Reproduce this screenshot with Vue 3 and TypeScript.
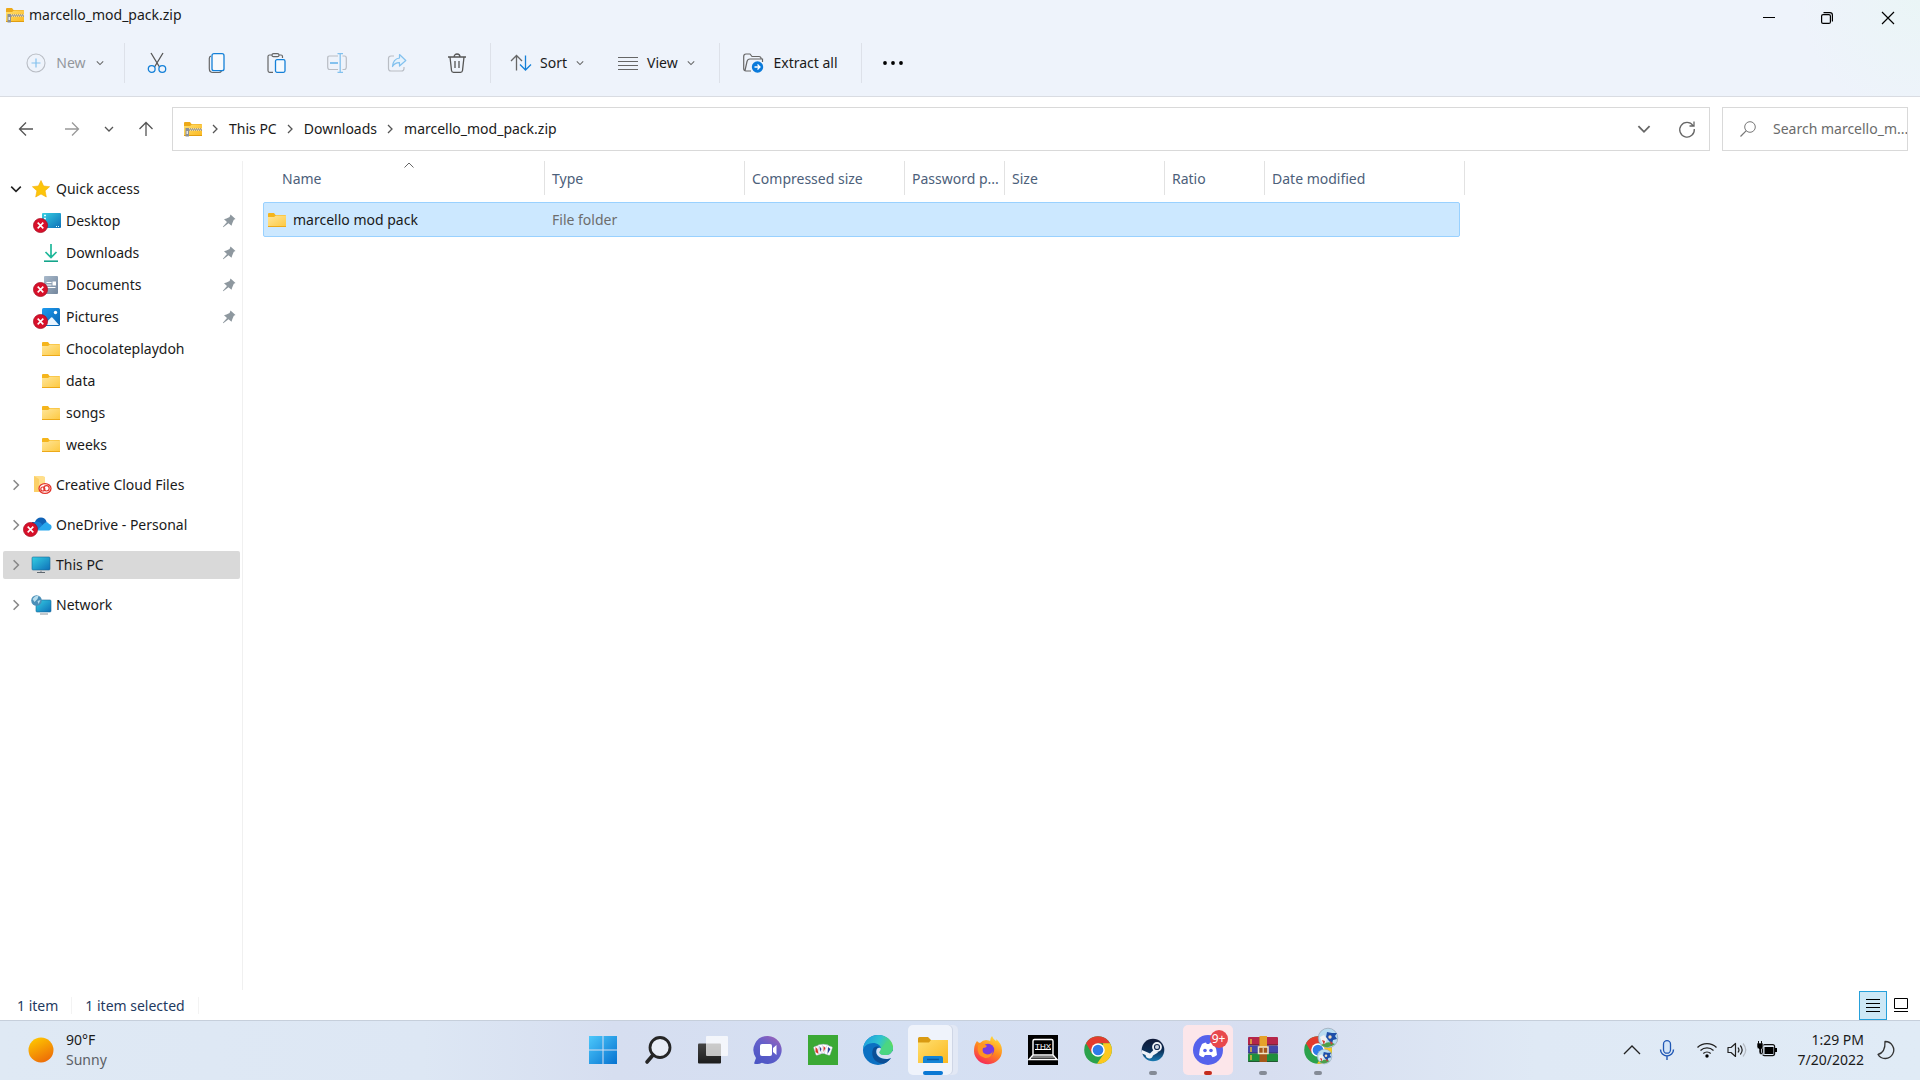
<script setup lang="ts">
interface Place {
  label: string
  icon: string
  pinned?: boolean
  offline?: boolean
}
interface Column {
  label: string
  width: number
}
interface TaskApp {
  name: string
  icon: string
  state?: 'active' | 'alert' | 'running'
}

const quickAccess: Place[] = [
  { label: 'Desktop', icon: 'desktop', pinned: true, offline: true },
  { label: 'Downloads', icon: 'downloads', pinned: true },
  { label: 'Documents', icon: 'documents', pinned: true, offline: true },
  { label: 'Pictures', icon: 'pictures', pinned: true, offline: true },
  { label: 'Chocolateplaydoh', icon: 'folder' },
  { label: 'data', icon: 'folder' },
  { label: 'songs', icon: 'folder' },
  { label: 'weeks', icon: 'folder' },
]

const roots: Place[] = [
  { label: 'Creative Cloud Files', icon: 'creative' },
  { label: 'OneDrive - Personal', icon: 'onedrive', offline: true },
  { label: 'This PC', icon: 'pc' },
  { label: 'Network', icon: 'network' },
]
const currentRoot = 'This PC'

const tools = [
  { name: 'Cut', icon: 'cut' },
  { name: 'Copy', icon: 'copy' },
  { name: 'Paste', icon: 'paste' },
  { name: 'Rename', icon: 'rename' },
  { name: 'Share', icon: 'share' },
  { name: 'Delete', icon: 'trash' },
]

const crumbs = ['This PC', 'Downloads', 'marcello_mod_pack.zip']

const columns: Column[] = [
  { label: 'Name', width: 282 },
  { label: 'Type', width: 200 },
  { label: 'Compressed size', width: 160 },
  { label: 'Password p...', width: 100 },
  { label: 'Size', width: 160 },
  { label: 'Ratio', width: 100 },
  { label: 'Date modified', width: 200 },
]

const apps: TaskApp[] = [
  { name: 'Start', icon: 'start' },
  { name: 'Search', icon: 'find' },
  { name: 'Task view', icon: 'taskview' },
  { name: 'Chat', icon: 'chat' },
  { name: 'Solitaire', icon: 'cards' },
  { name: 'Edge', icon: 'edge' },
  { name: 'File Explorer', icon: 'explorer', state: 'active' },
  { name: 'Firefox', icon: 'firefox' },
  { name: 'THX', icon: 'thx' },
  { name: 'Chrome', icon: 'chrome' },
  { name: 'Steam', icon: 'steam', state: 'running' },
  { name: 'Discord', icon: 'discord', state: 'alert' },
  { name: 'WinRAR', icon: 'winrar', state: 'running' },
  { name: 'Chrome profile', icon: 'chromeprofile', state: 'running' },
]
</script>

<template>
  <div class="screen">
    <svg class="sprite" aria-hidden="true">
      <defs>
        <linearGradient id="gFolder" x1="0" y1="0" x2="1" y2="1">
          <stop offset="0" stop-color="#ffe69a" /><stop offset="1" stop-color="#fdc83f" />
        </linearGradient>
        <linearGradient id="gExplorer" x1="0" y1="0" x2="1" y2="1">
          <stop offset="0" stop-color="#ffdf70" /><stop offset="1" stop-color="#fbb81f" />
        </linearGradient>
        <linearGradient id="gScreen" x1="0" y1="0" x2="1" y2="1">
          <stop offset="0" stop-color="#35cfe3" /><stop offset="1" stop-color="#0e6fb8" />
        </linearGradient>
        <linearGradient id="gPic" x1="0" y1="0" x2="1" y2="1">
          <stop offset="0" stop-color="#1d9bf0" /><stop offset="1" stop-color="#0a63b0" />
        </linearGradient>
        <linearGradient id="gDoc" x1="0" y1="0" x2="1" y2="1">
          <stop offset="0" stop-color="#a9bacb" /><stop offset="1" stop-color="#73869d" />
        </linearGradient>
        <linearGradient id="gSun" x1="0.2" y1="0" x2="0.7" y2="1">
          <stop offset="0" stop-color="#ffc800" /><stop offset="1" stop-color="#ec6a08" />
        </linearGradient>
        <linearGradient id="gWin" x1="0" y1="0" x2="1" y2="1">
          <stop offset="0" stop-color="#4cc8fb" /><stop offset="1" stop-color="#0672d0" />
        </linearGradient>
        <linearGradient id="gChat" x1="0.2" y1="1" x2="0.8" y2="0">
          <stop offset="0" stop-color="#4b55c4" /><stop offset="0.6" stop-color="#6460cb" /><stop offset="1" stop-color="#9a62b8" />
        </linearGradient>
        <linearGradient id="gEdgeTop" x1="0" y1="0.3" x2="1" y2="0.6">
          <stop offset="0" stop-color="#1e9fe0" /><stop offset="0.5" stop-color="#2fc3cf" /><stop offset="1" stop-color="#63e04c" />
        </linearGradient>
        <linearGradient id="gFox" x1="0.8" y1="0" x2="0.3" y2="1">
          <stop offset="0" stop-color="#ffe23c" /><stop offset="0.5" stop-color="#ff8a1e" /><stop offset="1" stop-color="#f6265a" />
        </linearGradient>
        <linearGradient id="gSteam" x1="0" y1="0" x2="0" y2="1">
          <stop offset="0" stop-color="#101a38" /><stop offset="0.5" stop-color="#0c2b52" /><stop offset="1" stop-color="#1a7db5" />
        </linearGradient>
        <linearGradient id="gDark" x1="0" y1="0" x2="0" y2="1">
          <stop offset="0" stop-color="#444" /><stop offset="1" stop-color="#1c1c1c" />
        </linearGradient>
      </defs>

      <symbol id="i-folder" viewBox="0 0 18 18">
        <path d="M0 3q0-1 1-1h5l1.500 2H17q1 0 1 1v3H0z" fill="#f5b51c" />
        <path d="M0 6h6l2-1.500h10V16H0z" fill="url(#gFolder)" />
        <path d="M0 15h18v1H0z" fill="#eda918" />
      </symbol>
      <symbol id="i-zip" viewBox="0 0 18 18">
        <path d="M0 3q0-1 1-1h5l1.500 2H17q1 0 1 1v3H0z" fill="#eda918" />
        <path d="M0 6h6l2-1.500h10V16H0z" fill="url(#gExplorer)" />
        <path d="M0 15h18v1H0z" fill="#e09d10" />
        <path d="M3 9.500h15" stroke="#f6ecd0" stroke-width="2" />
        <path d="M4 9h14M5 10h13" stroke="#666" stroke-dasharray="1 1" />
        <path d="M1.500 8h3.500v8.500H1.500z" fill="#8b9097" />
        <path d="M2.500 11h1.500v3H2.500z" fill="#e3e5e8" />
      </symbol>
      <symbol id="i-star" viewBox="0 0 18 18">
        <path d="M9 0.500l2.600 5.500 6 .7-4.500 4.100 1.200 6.200L9 14l-5.300 3 1.200-6.200L.4 6.700l6-.7z" fill="#fcc50b" stroke="#f6ad05" stroke-width=".6" />
      </symbol>
      <symbol id="i-desktop" viewBox="0 0 18 18">
        <rect x="0" y="1" width="19" height="15" rx="1" fill="url(#gScreen)" />
        <path d="M2 3.500h2M2 6.500h2M2 9.500h2" stroke="#dff" stroke-width="1.500" /><path d="M14 14.500h4" stroke="#dff" stroke-dasharray="1 1" />
      </symbol>
      <symbol id="i-downloads" viewBox="0 0 18 18">
        <path d="M9 0v13M3.500 8L9 13.500 14.500 8" fill="none" stroke="#1fb89a" stroke-width="1.700" />
        <path d="M2 17.200h14" stroke="#14a58b" stroke-width="1.600" />
      </symbol>
      <symbol id="i-documents" viewBox="0 0 18 18">
        <rect x="2" y="0" width="14" height="18" rx="1" fill="url(#gDoc)" />
        <path d="M4.500 6.500h5M4.500 9h5M4.500 11.500h9" stroke="#fff" stroke-width="1.200" /><rect x="10.500" y="5.500" width="3.500" height="4" fill="#fff" />
      </symbol>
      <symbol id="i-pictures" viewBox="0 0 18 18">
        <rect width="18" height="18" rx="1.500" fill="url(#gPic)" /><circle cx="13.500" cy="4.500" r="1.700" fill="#fff" />
        <path d="M2 17l7-7.500q.7-.6 1.400 0L17 17z" fill="#eaf5ff" />
      </symbol>
      <symbol id="i-creative" viewBox="0 0 18 18">
        <path d="M2 0h9l2 1v15H2z" fill="#ffdf8c" /><path d="M2 0l5 3v13H2z" fill="#fbd068" />
        <ellipse cx="13" cy="12.500" rx="6" ry="4.800" fill="#fff" stroke="#e3342a" stroke-width="1.300" />
        <circle cx="10.800" cy="13" r="2" fill="none" stroke="#e3342a" stroke-width="1.200" /><circle cx="14.500" cy="12.300" r="2.700" fill="none" stroke="#e3342a" stroke-width="1.200" />
      </symbol>
      <symbol id="i-onedrive" viewBox="0 0 18 18">
        <path d="M0 14V6q2 0 3 0 1.500-4.500 6-4.500 4 0 5.500 4L15 14z" fill="#0f62b6" />
        <path d="M1 7q4-3 8 0l5 7H1z" fill="#167bd1" />
        <path d="M5 14.500l7-7q3.500-2.500 5 .5 3 .8 2.500 3.700-.7 2.800-3.500 2.800z" fill="#29a8ee" />
      </symbol>
      <symbol id="i-pc" viewBox="0 0 18 18">
        <rect y="1" width="18" height="13" rx="1" fill="url(#gScreen)" stroke="#1b6a98" stroke-width=".6" />
        <path d="M8 14h2v2H8z" fill="#a5adb5" /><path d="M5 16.500h8" stroke="#5f6870" />
      </symbol>
      <symbol id="i-network" viewBox="0 0 18 18">
        <rect x="4" y="4" width="15" height="12" rx="1" fill="url(#gScreen)" stroke="#1b6a98" stroke-width=".6" />
        <path d="M8 18h8" stroke="#8a939b" /><circle cx="4.500" cy="4.500" r="5.300" fill="#4b8fb8" />
        <path d="M.5 3q3-4 6-3l-1 3-3 3zM5.500 5l3-1-2 4z" fill="#b7deee" />
      </symbol>
      <symbol id="i-offline" viewBox="0 0 16 16">
        <circle cx="8" cy="8" r="7.500" fill="#d8102a" stroke="#a50b20" stroke-width=".8" />
        <path d="M5 5l6 6M11 5l-6 6" stroke="#fff" stroke-width="1.700" />
      </symbol>
      <symbol id="i-pin" viewBox="0 0 14 14">
        <path d="M8.500 0.500l5 4.500-1.700.7-1.500 3.600-.8 2.500-3-2.500-5.200 4-.4-.5L5 8 2 5.200l2.500-.7L7.600 3z" fill="#8e989f" />
      </symbol>
      <symbol id="i-right" viewBox="0 0 10 10"><path d="M3 1l4 4-4 4" fill="none" stroke="currentColor" stroke-width="1.300" /></symbol>
      <symbol id="i-down" viewBox="0 0 10 10"><path d="M1 3l4 4 4-4" fill="none" stroke="currentColor" stroke-width="1.300" /></symbol>

      <symbol id="i-new" viewBox="0 0 20 20">
        <circle cx="10" cy="10" r="9" fill="none" stroke="#b9bdc4" stroke-width="1.100" /><path d="M10 5.500v9M5.500 10h9" stroke="#83c1ee" stroke-width="1.200" />
      </symbol>
      <symbol id="i-cut" viewBox="0 0 20 20">
        <path d="M4 0l8.500 14M16 0L7.500 14" stroke="#555" stroke-width="1.300" fill="none" />
        <circle cx="4.700" cy="16" r="3.400" fill="none" stroke="#1480d8" stroke-width="1.300" /><circle cx="15.300" cy="16" r="3.400" fill="none" stroke="#1480d8" stroke-width="1.300" />
      </symbol>
      <symbol id="i-copy" viewBox="0 0 20 20">
        <path d="M4 3q-1.700.5-1.700 2.500v10Q2.300 19.500 6 19.500h6q1.800 0 2.500-1.500" fill="none" stroke="#666" stroke-width="1.200" />
        <rect x="5" y=".7" width="12" height="17" rx="2" fill="#fff" fill-opacity=".6" stroke="#1480d8" stroke-width="1.300" />
      </symbol>
      <symbol id="i-paste" viewBox="0 0 20 20">
        <path d="M5 2H2.500Q1 2 1 3.500v14Q1 19.300 2.500 19.300H6M12 2h2q1.500 0 1.500 1.500V5" fill="none" stroke="#666" stroke-width="1.200" />
        <rect x="5" y=".7" width="7" height="3" rx="1.500" fill="none" stroke="#666" stroke-width="1.200" />
        <rect x="8.500" y="6.700" width="9.500" height="12.600" rx="1.500" fill="#f5faff" stroke="#1480d8" stroke-width="1.300" />
      </symbol>
      <symbol id="i-rename" viewBox="0 0 20 20">
        <path d="M11 3H2.500Q.7 3 .7 5v9q0 2.500 2 2.500H11M15.500 3h2q1.800 0 1.800 2v9q0 2.500-2 2.500h-1.800" fill="none" stroke="#b9bdc4" stroke-width="1.200" />
        <path d="M10.500.7h5.500M13.200.7v18.600M10.500 19.300h5.500" stroke="#83c1ee" stroke-width="1.300" /><path d="M3 10h8" stroke="#83c1ee" stroke-width="2" />
      </symbol>
      <symbol id="i-share" viewBox="0 0 20 20">
        <path d="M7 3H4Q1.500 3 1.500 5.500v10Q1.500 18 4 18h10.500q2.500 0 2.500-2.500V14" fill="none" stroke="#b9bdc4" stroke-width="1.200" />
        <path d="M12.500 1.500l6.300 6-6.300 5.500V9.700Q8 9.500 5.500 13.500 6 6 12.500 5z" fill="#e6f2fc" stroke="#83c1ee" stroke-width="1.200" stroke-linejoin="round" />
      </symbol>
      <symbol id="i-trash" viewBox="0 0 20 20">
        <path d="M1 4h18M7 4a3 3 0 0 1 6 0M3 4l1.500 13.500Q4.700 19.300 6.500 19.300h7q1.800 0 2-1.800L17 4M8 8v7M12 8v7" fill="none" stroke="#555" stroke-width="1.300" />
      </symbol>
      <symbol id="i-sort" viewBox="0 0 20 20">
        <path d="M5.500 17.500V3M0 8l5.500-5.500L11 8" fill="none" stroke="#666" stroke-width="1.300" />
        <path d="M14.500 2.500V17M9 11.500l5.500 5.500L20 11.500" fill="none" stroke="#1480d8" stroke-width="1.300" />
      </symbol>
      <symbol id="i-view" viewBox="0 0 20 20"><path d="M0 4.500h20M0 8.500h20M0 12.500h20M0 16.500h20" stroke="#666" stroke-width="1.200" /></symbol>
      <symbol id="i-extract" viewBox="0 0 20 20">
        <path d="M8 18H3Q.7 18 .7 15.500V3.500Q.7 1 3 1h4l2 2.500h7q2 0 2.300 2.500M2 17.500l2-9Q4.500 6 7 6h12.500V9" fill="none" stroke="#666" stroke-width="1.200" />
        <circle cx="14.500" cy="14" r="5.700" fill="#0a7adb" /><path d="M11.500 14h5.500M14.500 11.500L17 14l-2.500 2.500" fill="none" stroke="#fff" stroke-width="1.300" />
      </symbol>
      <symbol id="i-more" viewBox="0 0 20 20"><circle cx="2" cy="10" r="1.900" /><circle cx="10" cy="10" r="1.900" /><circle cx="18" cy="10" r="1.900" /></symbol>
      <symbol id="i-arrow" viewBox="0 0 16 16"><path d="M15 8H1.500M8 1.500L1.500 8 8 14.500" fill="none" stroke="currentColor" stroke-width="1.300" /></symbol>

      <symbol id="i-start" viewBox="0 0 30 30"><path d="M1 1h13.500v13.500H1zM15.500 1H29v13.500H15.500zM1 15.500h13.500V29H1zM15.500 15.500H29V29H15.500z" fill="url(#gWin)" /></symbol>
      <symbol id="i-find" viewBox="0 0 30 30">
        <circle cx="17" cy="12.500" r="10" fill="#e9edf6" stroke="#262626" stroke-width="2.800" /><path d="M10 20l-6 7" stroke="#262626" stroke-width="3.600" stroke-linecap="round" />
      </symbol>
      <symbol id="i-taskview" viewBox="0 0 30 30">
        <rect x="0" y="8.500" width="23" height="20" rx="1" fill="url(#gDark)" />
        <rect x="8" y="1" width="22" height="20" rx="1" fill="#fff" fill-opacity=".72" />
      </symbol>
      <symbol id="i-chat" viewBox="0 0 30 30">
        <path d="M15 1a14 14 0 1 1-6 26.800Q5 30 1 28.500L3 23A14 14 0 0 1 15 1z" fill="url(#gChat)" />
        <rect x="7" y="9" width="12" height="12" rx="2" fill="#fff" /><path d="M20 13l3.500-3v10L20 17z" fill="#fff" />
      </symbol>
      <symbol id="i-cards" viewBox="0 0 30 30">
        <rect width="30" height="30" fill="#3ba935" />
        <g fill="#fff" stroke="#aac" stroke-width=".4">
          <rect x="6.500" y="11" width="6" height="9" rx="1" transform="rotate(-18 9 15)" /><rect x="10.500" y="9.500" width="6" height="9" rx="1" transform="rotate(-6 13 15)" />
          <rect x="14" y="9.500" width="6" height="9" rx="1" transform="rotate(6 17 15)" /><rect x="17.500" y="11" width="6" height="9" rx="1" transform="rotate(18 21 15)" />
        </g>
        <path d="M7.500 12l2 2 1 5-3-2zM15.500 11l2 2-2 4z" fill="#d9362b" /><path d="M11.500 11l2 3-1.500 3zM20 12l2.500 2-3 5z" fill="#2b3f9a" />
      </symbol>
      <symbol id="i-edge" viewBox="0 0 30 30">
        <circle cx="15" cy="15" r="15" fill="#0b70c2" />
        <path d="M0 14C1 5 8 0 15 0c9 0 15 6 15 12.500 0 5-4 7.500-8 7.500-3.500 0-5.500-1-5.500-2.500 0-1.200 1.500-1.500 1.500-4 0-3-3.500-5.500-8-5.500S2 10 0 14z" fill="url(#gEdgeTop)" />
        <path d="M10 14c-3 8 3 15 11 14.500 3-1 6-3.500 7.500-6C22 26 13 23 13 16.500c0-2 1.200-3.500 3-4.500-3-1-5 0-6 2z" fill="#0c4f96" />
        <path d="M13.500 15c-1.500 5 4 9.500 11 9l6-1.500V15L27 19c-3 1.500-10 1.500-10.500-1.500 0-1.500 1.500-1.500 1.500-4-1.500-1.500-4-.5-4.500 1.500z" fill="#d7e0f3" />
        <path d="M18 13.500c0 2.500-1.500 2.800-1.500 4 0 1.500 2 2.500 5.500 2.500 4 0 8-2.500 8-7.500L24 6z" fill="#4bd682" />
      </symbol>
      <symbol id="i-explorer" viewBox="0 0 30 30">
        <path d="M0 3.500Q0 2 1.500 2H10l3 3h17v6H0z" fill="#d99a12" />
        <path d="M0 7.500h11L13 5h17v23H0z" fill="url(#gExplorer)" />
        <path d="M5 28v-5q0-2 2-2h16q2 0 2 2v5z" fill="#1484d6" /><path d="M9 24.500h12" stroke="#0a5aa0" stroke-width="1.500" />
      </symbol>
      <symbol id="i-firefox" viewBox="0 0 30 30">
        <path d="M4 6q1 1.500 3 2 3-3 6-3 4 0 4 1.500Q17 3 19 1q1 3 4 5 1 0 0-2 6 4.500 6 11.500A14 13.500 0 0 1 1 16Q1 10 4 6z" fill="url(#gFox)" />
        <circle cx="15" cy="15" r="6.200" fill="#7a3be0" /><path d="M5 10q3-2 5-1.500l4 2.500q-1 2-4 2-2 5 4 6.500 5 0 6-4-1 8-8 7.500Q3 21 5 10z" fill="#ff9422" />
      </symbol>
      <symbol id="i-thx" viewBox="0 0 30 30">
        <rect width="30" height="30" fill="#000" /><path d="M5 20V6q0-1.500 1.500-1.500h17Q25 4.500 25 6v14M5 20h20l4 4.500H1z" fill="none" stroke="#fff" stroke-width="1.400" />
        <path d="M7 14.500h16M4 22h22" stroke="#fff" /><text x="15" y="13.500" text-anchor="middle" font-family="Liberation Sans, sans-serif" font-size="8" fill="#fff">THX</text>
      </symbol>
      <symbol id="i-chrome" viewBox="0 0 30 30">
        <circle cx="15" cy="15" r="13.800" fill="#2ba24c" />
        <path d="M3 8.200a13.800 13.800 0 0 1 24 0H15L9 18.500z" fill="#e33b2e" />
        <path d="M27 8.200A13.800 13.800 0 0 1 14 28.800L21 18.500 20 8.200z" fill="#fdc81e" />
        <circle cx="15" cy="15" r="6.800" fill="#fff" /><circle cx="15" cy="15" r="5.300" fill="#2f7be8" />
      </symbol>
      <symbol id="i-steam" viewBox="0 0 30 30">
        <circle cx="15" cy="15" r="11.300" fill="url(#gSteam)" /><path d="M4 15l8 3.500 4-4 4 3-5 3q-1 3.500-4 3Q8 23 7.500 20L4 18.500z" fill="#f0f3f8" />
        <circle cx="19" cy="12" r="4" fill="#12284e" stroke="#f0f3f8" stroke-width="1.800" /><circle cx="19" cy="12" r="2" fill="#cfd6e2" />
      </symbol>
      <symbol id="i-discord" viewBox="0 0 30 30">
        <circle cx="15" cy="15" r="15" fill="#5562ec" />
        <path d="M9 9q2-1.500 4-1.500l.8 1.500h2.400l.8-1.500q2 0 4 1.500 3 5 3 11-2 2-4.500 2.200L18 20h-6l-1.500 2.200Q8 22 6 20q0-6 3-11z" fill="#fff" />
        <circle cx="12" cy="15.500" r="1.800" fill="#5562ec" /><circle cx="18" cy="15.500" r="1.800" fill="#5562ec" />
      </symbol>
      <symbol id="i-winrar" viewBox="0 0 30 30">
        <rect y="2" width="30" height="8.500" rx="1" fill="#b5264a" /><rect y="10.500" width="30" height="8" rx="1" fill="#4347a8" /><rect y="18.500" width="30" height="8.500" rx="1" fill="#1f8f3c" />
        <path d="M0 9.800h30M0 18h30M0 26.500h30" stroke="#222" stroke-opacity=".5" /><path d="M3 4v5M3 12v5M3 20v5" stroke="#e8b83c" stroke-width="1.500" />
        <rect x="11.500" y="2" width="7.500" height="25" fill="#a5581b" /><rect x="11.500" y="1" width="7.500" height="11" fill="#e5a22b" />
        <rect x="10.500" y="12" width="9.500" height="6.500" fill="none" stroke="#f3e6c4" stroke-width="1.500" /><path d="M15.200 13v6" stroke="#f3e6c4" />
      </symbol>
      <symbol id="i-hedgehog" viewBox="0 0 20 20">
        <circle cx="10" cy="10" r="9.800" fill="#b9dcf0" stroke="#8f9aa8" stroke-width=".6" /><path d="M3 17q7-5 14-1-7 6-14 1z" fill="#4da04a" />
        <path d="M9 4l5 1 5 0-2 3 2 3-4 1-1 4-3-3-3-4z" fill="#1e4fa8" /><path d="M2 9l4-2 3 4-2 5-3-1z" fill="#f1f1f1" /><path d="M4 12l3 1-1 4zM12 13l3 2-2 2z" fill="#d03a34" /><circle cx="12" cy="9" r="1.700" fill="#f3d9b4" />
      </symbol>

      <symbol id="i-wifi" viewBox="0 0 20 20">
        <path d="M.5 7.500a13.500 13.500 0 0 1 19 0M3.500 10.500a9.500 9.500 0 0 1 13 0M6.300 13.500a5.500 5.500 0 0 1 7.400 0" fill="none" stroke="#222" stroke-width="1.300" /><circle cx="10" cy="16" r="1.700" />
      </symbol>
      <symbol id="i-speaker" viewBox="0 0 20 20">
        <path d="M1 7.500h3L8.500 3.500v13L4 12.500H1z" fill="none" stroke="#222" stroke-width="1.200" stroke-linejoin="round" />
        <path d="M11 7.500q2 2.500 0 5M13.300 5.500q3.700 4.500 0 9" fill="none" stroke="#222" stroke-width="1.200" /><path d="M16 3.500q5.500 6.500 0 13" fill="none" stroke="#b4bac2" stroke-width="1.200" />
      </symbol>
      <symbol id="i-battery" viewBox="0 0 20 20">
        <rect x="5.600" y="4.600" width="12" height="11" rx="2" fill="none" stroke="#111" stroke-width="1.200" /><rect x="7.500" y="7" width="9" height="7" />
        <path d="M18 8h2v4h-2z" /><path d="M0 3h6v4q0 1.500-1.500 2v3q0 1.500 2 2.500H4Q2 14 2 12V9Q0 8.500 0 7z" stroke="#e0ebf6" stroke-width=".6" /><path d="M1.500 1v3M4.500 1v3" stroke="#111" />
      </symbol>
      <symbol id="i-mic" viewBox="0 0 20 20">
        <rect x="6.500" y=".7" width="7" height="12.500" rx="3.500" fill="#d3e4f7" stroke="#1f57b5" stroke-width="1.300" /><path d="M3.500 9.500a6.500 6.500 0 0 0 13 0M10 16v4" fill="none" stroke="#1f57b5" stroke-width="1.400" />
      </symbol>
      <symbol id="i-moon" viewBox="0 0 20 20">
        <path d="M9 1.500a8.500 8.500 0 1 1-7 13q7.500-2 7-13z" fill="none" stroke="#333" stroke-width="1.300" stroke-linejoin="round" />
      </symbol>
    </svg>

    <header class="chrome">
      <div class="titlebar">
        <svg class="i18"><use href="#i-zip" /></svg>
        <h1>marcello_mod_pack.zip</h1>
        <div class="window-buttons">
          <button aria-label="Minimize"><svg viewBox="0 0 12 12"><path d="M0 5.500h12" stroke="#000" /></svg></button>
          <button aria-label="Restore">
            <svg viewBox="0 0 12 12"><rect x=".6" y="2.600" width="8.800" height="8.800" rx="1.500" fill="none" stroke="#000" stroke-width="1.200" /><path d="M2.500.6H9q2.400 0 2.400 2.400v6.500" fill="none" stroke="#000" stroke-width="1.200" /></svg>
          </button>
          <button aria-label="Close"><svg viewBox="0 0 12 12"><path d="M0 0l12 12M12 0L0 12" stroke="#000" stroke-width="1.200" /></svg></button>
        </div>
      </div>
      <div class="toolbar">
        <button class="command new" disabled>
          <svg class="i20"><use href="#i-new" /></svg><span>New</span><svg class="i8"><use href="#i-down" /></svg>
        </button>
        <div class="tools">
          <button v-for="tool in tools" :key="tool.name" :aria-label="tool.name"><svg class="i20"><use :href="'#i-' + tool.icon" /></svg></button>
        </div>
        <div class="arrange">
          <button class="command"><svg class="i20"><use href="#i-sort" /></svg><span>Sort</span><svg class="i8"><use href="#i-down" /></svg></button>
          <button class="command"><svg class="i20"><use href="#i-view" /></svg><span>View</span><svg class="i8"><use href="#i-down" /></svg></button>
        </div>
        <button class="command extract"><svg class="i20"><use href="#i-extract" /></svg><span>Extract all</span></button>
        <button class="more" aria-label="See more"><svg class="i20"><use href="#i-more" /></svg></button>
      </div>
    </header>

    <nav class="location">
      <div class="history">
        <button aria-label="Back"><svg class="i16"><use href="#i-arrow" /></svg></button>
        <button aria-label="Forward" class="faded"><svg class="i16"><use href="#i-arrow" class="flip" /></svg></button>
        <button aria-label="Recent locations" class="recent"><svg class="i10"><use href="#i-down" /></svg></button>
        <button aria-label="Up"><svg class="i16 up"><use href="#i-arrow" /></svg></button>
      </div>
      <div class="address">
        <svg class="i18"><use href="#i-zip" /></svg>
        <template v-for="crumb in crumbs" :key="crumb">
          <svg class="i10"><use href="#i-right" /></svg><a href="#">{{ crumb }}</a>
        </template>
        <button class="expand" aria-label="Previous locations"><svg class="i14"><use href="#i-down" /></svg></button>
        <button aria-label="Refresh">
          <svg class="i16" viewBox="0 0 16 16"><path d="M14 4.500A7.300 7.300 0 1 0 15.300 8M15 .5v4.500h-4.500" fill="none" stroke="#666" stroke-width="1.300" /></svg>
        </button>
      </div>
      <label class="search">
        <svg class="i16" viewBox="0 0 16 16"><circle cx="10" cy="6" r="5.300" fill="none" stroke="#777" /><path d="M6.300 9.700L.5 15.500" stroke="#777" stroke-width="1.200" /></svg>
        <input type="text" aria-label="Search" placeholder="Search marcello_m..." />
      </label>
    </nav>

    <main>
      <aside>
        <a href="#" class="place root"><svg class="i12 dark"><use href="#i-down" /></svg><span class="pic"><svg class="i18"><use href="#i-star" /></svg></span>Quick access</a>
        <a v-for="place in quickAccess" :key="place.label" href="#" class="place sub">
          <span class="pic"><svg class="i18"><use :href="'#i-' + place.icon" /></svg><svg v-if="place.offline" class="badge"><use href="#i-offline" /></svg></span>
          {{ place.label }}
          <svg v-if="place.pinned" class="pin"><use href="#i-pin" /></svg>
        </a>
        <a v-for="place in roots" :key="place.label" href="#" class="place root spaced" :class="{ current: place.label === currentRoot }">
          <svg class="i12"><use href="#i-right" /></svg>
          <span class="pic"><svg class="i18"><use :href="'#i-' + place.icon" /></svg><svg v-if="place.offline" class="badge"><use href="#i-offline" /></svg></span>
          {{ place.label }}
        </a>
      </aside>
      <section class="files">
        <table>
          <colgroup><col v-for="column in columns" :key="column.label" :style="{ width: column.width + 'px' }" /></colgroup>
          <thead>
            <tr>
              <th v-for="(column, index) in columns" :key="column.label" scope="col">
                <div>{{ column.label }}<svg v-if="index === 0" class="sorted" viewBox="0 0 10 6"><path d="M.5 5.500L5 1l4.500 4.500" fill="none" stroke="#666" /></svg></div>
              </th>
            </tr>
          </thead>
          <tbody>
            <tr>
              <td><div class="file"><svg class="i18"><use href="#i-folder" /></svg>marcello mod pack</div></td>
              <td class="muted">File folder</td>
              <td></td><td></td><td></td><td></td><td></td>
            </tr>
          </tbody>
        </table>
      </section>
    </main>

    <footer class="status">
      <span>1 item</span>
      <span>1 item selected</span>
      <div class="modes">
        <button class="on" aria-label="Details"><svg viewBox="0 0 14 14"><path d="M0 1.500h14M0 5.500h14M0 9.500h14M0 13.500h14" stroke="#000" /></svg></button>
        <button aria-label="Large icons"><svg viewBox="0 0 14 14"><path d="M.5.500h13v10H.5zM0 13.500h14" fill="none" stroke="#000" /></svg></button>
      </div>
    </footer>

    <div class="taskbar">
      <button class="weather">
        <svg viewBox="0 0 26 26"><circle cx="13" cy="13" r="12.500" fill="url(#gSun)" /></svg>
        <span>90°F<br /><em>Sunny</em></span>
      </button>
      <div class="apps">
        <button v-for="app in apps" :key="app.name" :aria-label="app.name" :class="app.state">
          <svg v-if="app.icon === 'chromeprofile'" class="i30" viewBox="0 0 30 30">
            <use href="#i-chrome" width="30" height="30" /><use href="#i-hedgehog" x="15" y="-7" width="20" height="20" /><use href="#i-hedgehog" x="14" y="14" width="15" height="15" />
          </svg>
          <svg v-else class="i30"><use :href="'#i-' + app.icon" /></svg>
          <span v-if="app.state === 'alert'" class="count">9+</span>
        </button>
      </div>
      <div class="tray">
        <button aria-label="Show hidden icons"><svg class="i16" viewBox="0 0 16 16"><path d="M0 12l8-8 8 8" fill="none" stroke="#222" stroke-width="1.300" /></svg></button>
        <button aria-label="Microphone"><svg class="i20"><use href="#i-mic" /></svg></button>
        <button class="quick" aria-label="Network, volume and battery">
          <svg class="i20"><use href="#i-wifi" /></svg><svg class="i20"><use href="#i-speaker" /></svg><svg class="i20"><use href="#i-battery" /></svg>
        </button>
        <button class="clock"><span>1:29 PM<br />7/20/2022</span><svg class="i20"><use href="#i-moon" /></svg></button>
      </div>
    </div>
  </div>
</template>

<style>
body {
  background: #fff;
}
</style>

<style scoped>
.screen {
  display: flex;
  flex-direction: column;
  min-height: 100vh;
  font: 14px/20px 'Noto Sans', sans-serif;
  color: #1a1a1a;
}
* {
  box-sizing: border-box;
}
svg {
  display: block;
  flex: none;
  overflow: visible;
}
symbol {
  overflow: visible;
}
.sprite {
  position: absolute;
  width: 0;
  height: 0;
}
button {
  display: flex;
  align-items: center;
  justify-content: center;
  padding: 0;
  border: 0;
  background: none;
  font: inherit;
  color: inherit;
}
a {
  color: inherit;
  text-decoration: none;
}
.i8 { width: 8px; height: 8px; }
.i10 { width: 10px; height: 10px; }
.i12 { width: 12px; height: 12px; }
.i14 { width: 14px; height: 14px; }
.i16 { width: 16px; height: 16px; }
.i18 { width: 18px; height: 18px; }
.i20 { width: 20px; height: 20px; }
.i30 { width: 30px; height: 30px; }

.chrome {
  background: radial-gradient(circle at 100% 0, #eaf5f6 0, #eef3fb 120px);
  border-bottom: 1px solid #d9dce2;
}
.titlebar {
  display: flex;
  align-items: center;
  gap: 5px;
  height: 30px;
  padding-left: 6px;
}
h1 {
  margin: 0;
  font: inherit;
}
.window-buttons {
  display: flex;
  align-self: flex-start;
  margin-left: auto;
}
.window-buttons button {
  width: 58px;
  height: 36px;
}
.window-buttons button:last-child {
  width: 64px;
}
.window-buttons svg {
  width: 12px;
  height: 12px;
}
.toolbar {
  display: flex;
  align-items: center;
  height: 66px;
}
.command {
  gap: 10px;
}
.toolbar .i8 {
  color: #666;
}
.new {
  width: 125px;
  height: 40px;
  color: #93979d;
  border-right: 1px solid #dde1e9;
  padding-left: 6px;
}
.tools {
  display: flex;
  width: 366px;
  height: 40px;
  padding-left: 2px;
  border-right: 1px solid #dde1e9;
}
.tools button {
  width: 60px;
}
.arrange {
  display: flex;
  gap: 34px;
  width: 229px;
  height: 40px;
  padding-left: 20px;
  border-right: 1px solid #dde1e9;
}
.arrange .command {
  gap: 9px;
}
.extract {
  width: 142px;
  height: 40px;
  border-right: 1px solid #dde1e9;
}
.more {
  width: 62px;
}

.location {
  display: flex;
  padding: 10px 12px 10px 0;
}
.history {
  display: flex;
  flex: none;
  width: 172px;
  padding-left: 3px;
  color: #555;
}
.history button {
  width: 46px;
}
.history .recent {
  width: 28px;
}
.history .faded {
  color: #999;
}
.flip {
  transform: scaleX(-1);
  transform-origin: 8px 8px;
}
.up {
  transform: rotate(90deg);
}
.address {
  display: flex;
  flex: 1;
  align-items: center;
  height: 44px;
  padding: 0 14px 0 11px;
  border: 1px solid #d9d9d9;
}
.address .i10 {
  margin: 0 9px 0 8px;
  color: #555;
}
.address .expand {
  margin: 0 28px 0 auto;
  color: #666;
}
.search {
  display: flex;
  align-items: center;
  gap: 17px;
  width: 186px;
  height: 44px;
  margin-left: 12px;
  padding-left: 17px;
  border: 1px solid #d9d9d9;
}
.search input {
  flex: 1;
  min-width: 0;
  padding: 0;
  border: 0;
  outline: 0;
  background: none;
  font: inherit;
}
.search input::placeholder {
  color: #6b6b6b;
  opacity: 1;
}

main {
  display: flex;
  flex: 1;
}
aside {
  width: 243px;
  padding: 14px 2px 0 3px;
  border-right: 1px solid #f0f0f0;
}
.place {
  display: flex;
  align-items: center;
  height: 28px;
  margin-bottom: 4px;
}
.place .i12 {
  margin: 0 10px 0 7px;
  color: #888;
}
.place .dark {
  color: #222;
}
.place .pic {
  position: relative;
  margin-right: 6px;
}
.sub {
  padding-left: 39px;
}
.spaced {
  margin: 12px 0;
}
.current {
  background: #d9d9d9;
  border-radius: 2px;
}
.badge {
  position: absolute;
  left: -9px;
  top: 6px;
  width: 15px;
  height: 15px;
}
.pin {
  width: 14px;
  height: 14px;
  margin: 0 4px 0 auto;
}

.files {
  flex: 1;
  padding-left: 20px;
}
table {
  width: 1202px;
  table-layout: fixed;
  border-collapse: separate;
  border-spacing: 0;
}
th {
  height: 41px;
  padding: 0;
  font-weight: 400;
  text-align: left;
  vertical-align: top;
  color: #4c607a;
}
th div {
  position: relative;
  height: 34px;
  padding: 8px 0 0 7px;
  border-right: 1px solid #e2e2e2;
  white-space: nowrap;
}
th:first-child div {
  padding-left: 19px;
}
.sorted {
  position: absolute;
  top: 1px;
  left: 50%;
  width: 10px;
  height: 6px;
}
tbody tr {
  position: relative;
  z-index: 0;
}
td:first-child::before {
  content: '';
  position: absolute;
  inset: 0 5px 0 0;
  z-index: -1;
  background: #cce8ff;
  border: 1px solid #99d1ff;
  border-radius: 2px;
}
td {
  height: 35px;
  padding: 1px 7px 0;
}
td:first-child {
  padding-left: 5px;
}
.file {
  display: flex;
  align-items: center;
  gap: 7px;
}
.muted {
  color: #6d6d6d;
}

.status {
  display: flex;
  align-items: center;
  height: 30px;
  padding: 0 6px 0 4px;
  color: #1f3a5f;
}
.status span {
  padding: 1px 13px 0;
  border-right: 1px solid #f3f3f3;
  line-height: 16px;
}
.modes {
  display: flex;
  margin-left: auto;
}
.modes button {
  width: 27px;
  height: 29px;
}
.modes .on {
  width: 28px;
  background: #cde8f6;
  border: 1px solid #26a0da;
}
.modes svg {
  width: 14px;
  height: 14px;
}

.taskbar {
  display: grid;
  grid-template-columns: 1fr auto 1fr;
  align-items: center;
  height: 60px;
  padding-bottom: 1px;
  border-top: 1px solid #c6cfdb;
  background: linear-gradient(90deg, #dfe9f4 0, #dde7f4 22%, #d6def0 32%, #d5e0f3 48%, #d7def0 66%, #dfe9f5 80%, #e0ebf6 100%);
}
.weather {
  justify-self: start;
  gap: 12px;
  padding-left: 28px;
  text-align: left;
}
.weather svg {
  width: 26px;
  height: 26px;
}
.weather em {
  font-style: normal;
  color: #5b5f66;
}
.apps {
  display: flex;
  gap: 5px;
}
.apps button {
  position: relative;
  width: 50px;
  height: 50px;
  border-radius: 5px;
}
.apps .active {
  background: #eff3fb;
  box-shadow: inset -5px 0 #e2e8f5, inset -6px 0 #cfd6e6;
}
.apps .alert {
  background: #fce6ea;
}
.apps .active::after,
.apps .alert::after,
.apps .running::after {
  content: '';
  position: absolute;
  bottom: 0;
  width: 8px;
  height: 4px;
  border-radius: 2px;
  background: #858b96;
}
.apps .active::after {
  width: 20px;
  background: #0a78d4;
}
.apps .alert::after {
  background: #c42b1c;
}
.count {
  position: absolute;
  top: 5px;
  right: 5px;
  width: 18px;
  height: 18px;
  border-radius: 9px;
  background: #e8484c;
  color: #fff;
  font-size: 12px;
  line-height: 18px;
}
.tray {
  display: flex;
  justify-self: end;
  align-items: center;
  padding-right: 24px;
}
.tray .i16 {
  margin-right: 17px;
}
.quick {
  gap: 10px;
  margin: 0 21px 0 20px;
}
.clock {
  gap: 12px;
  text-align: right;
}
</style>
